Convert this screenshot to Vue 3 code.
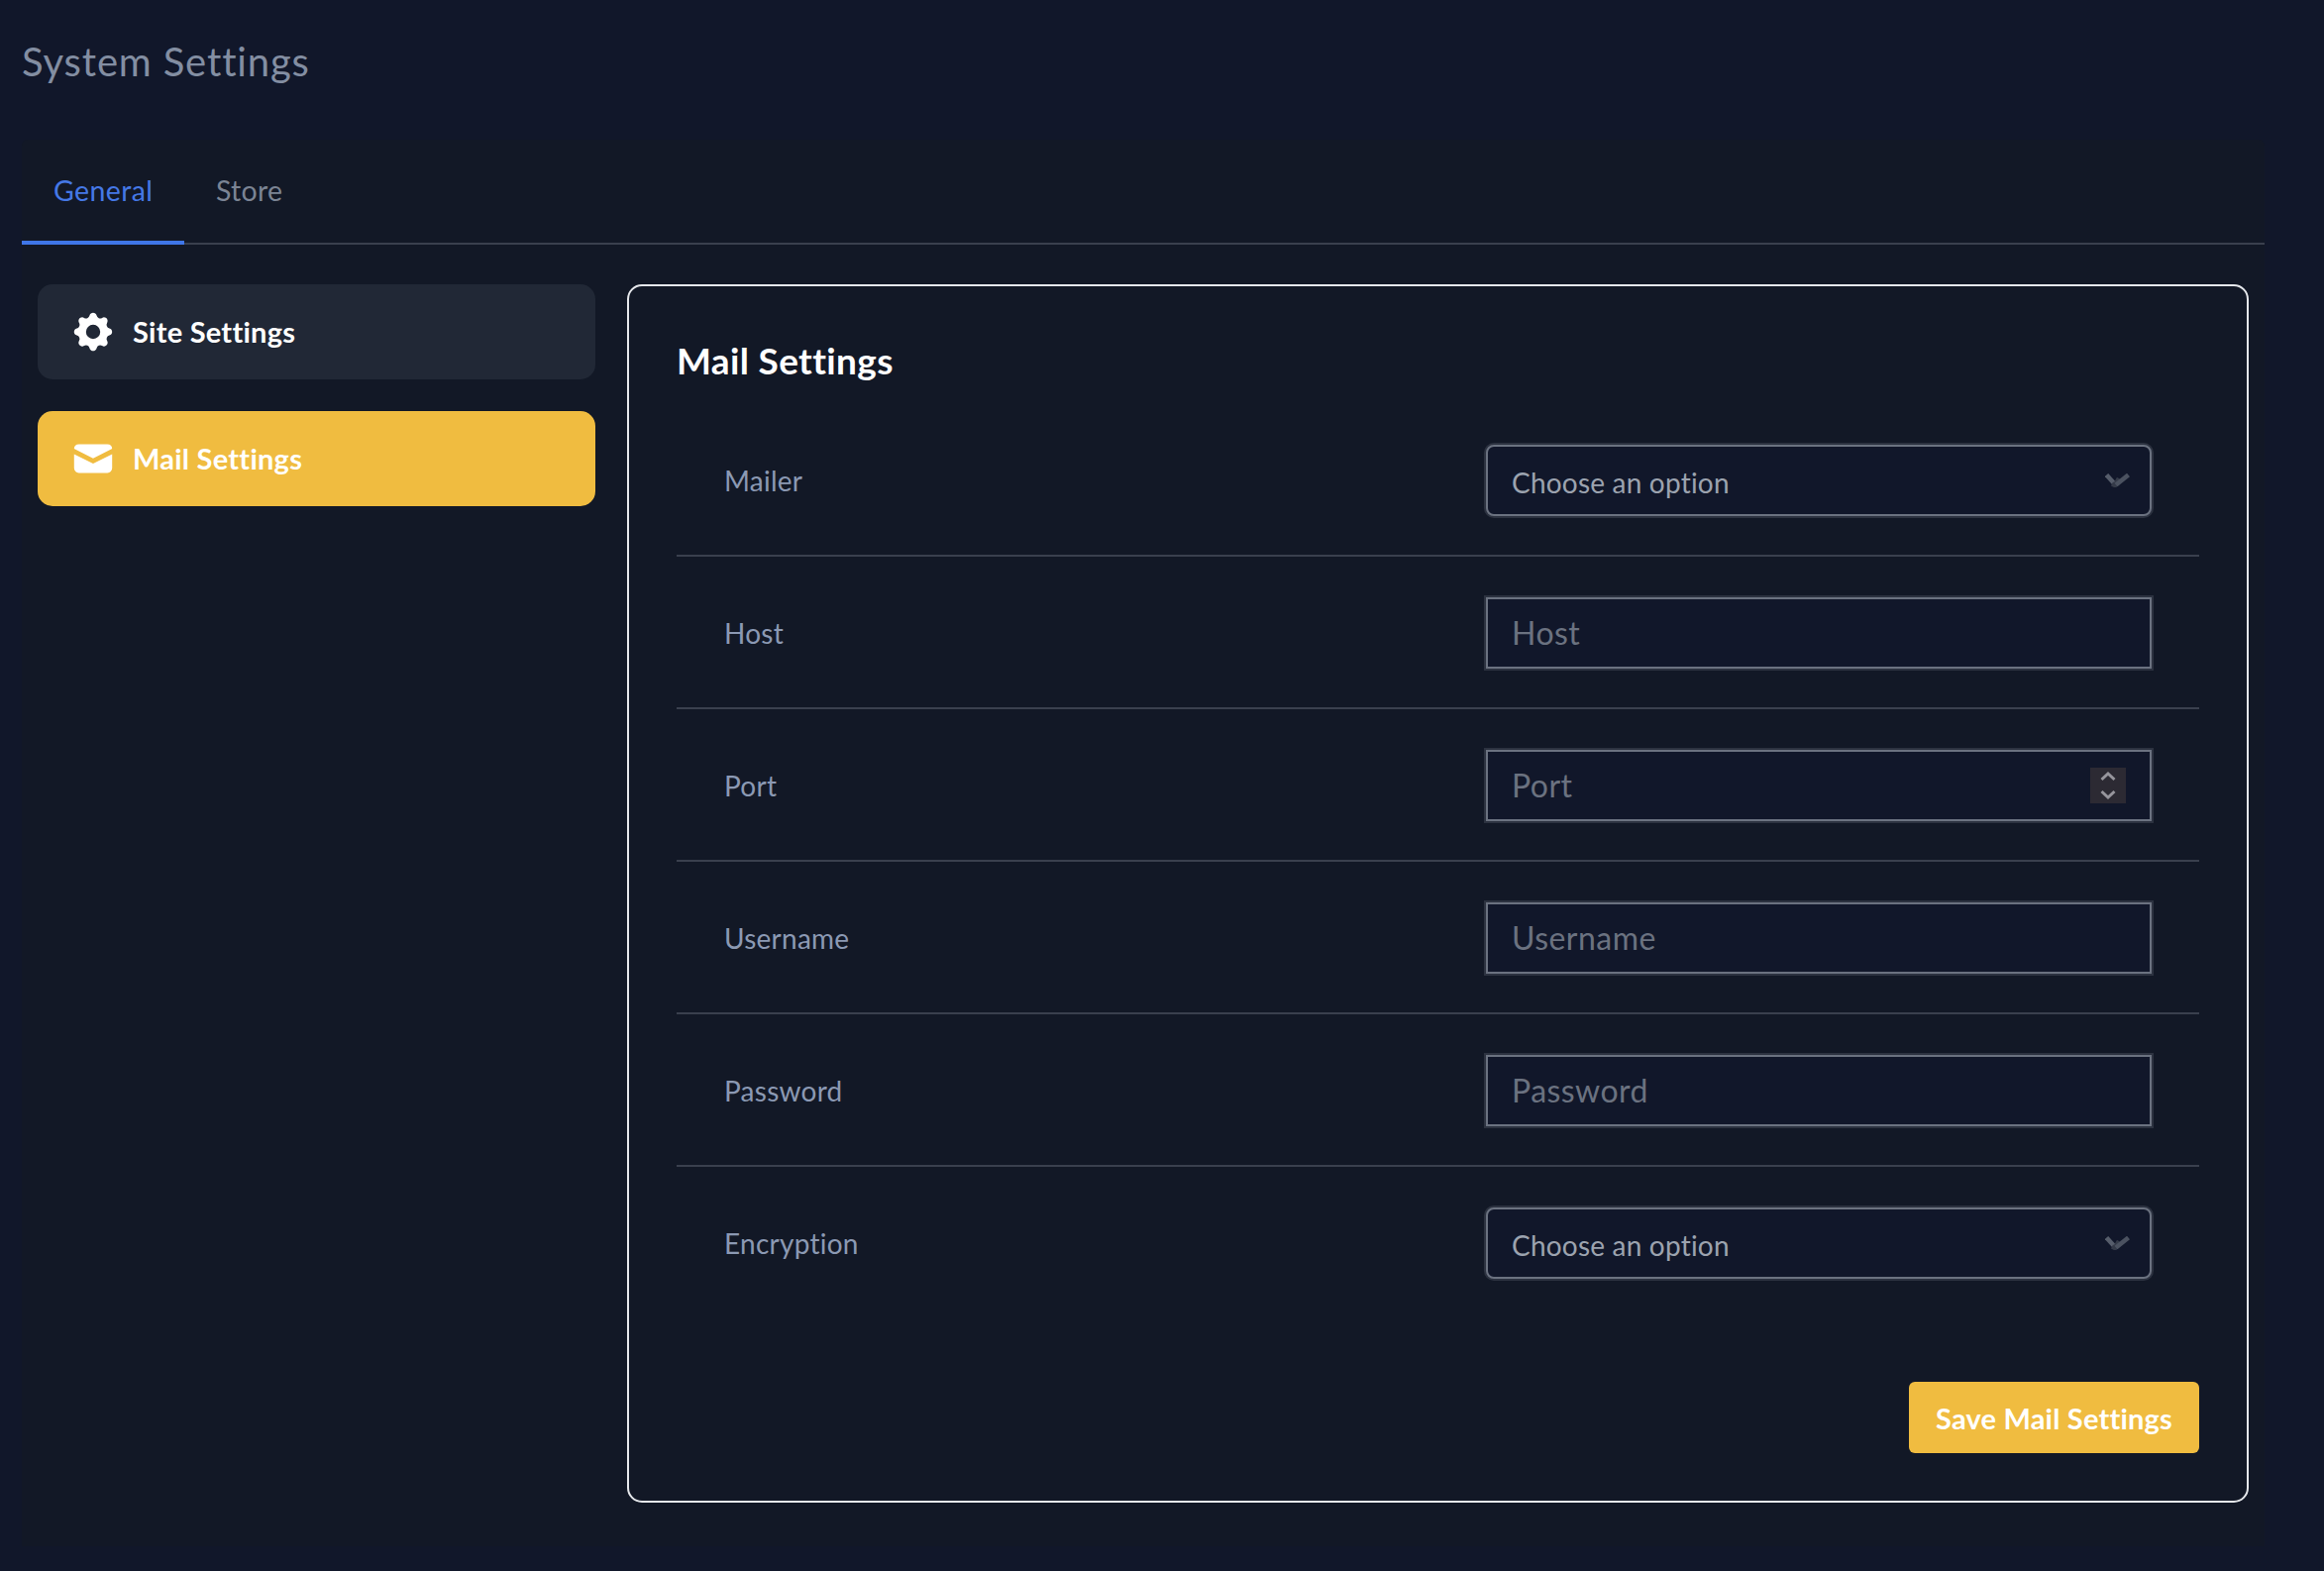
<script setup>
const rows = [
  { label: 'Mailer', kind: 'select' },
  { label: 'Host', kind: 'text' },
  { label: 'Port', kind: 'number' },
  { label: 'Username', kind: 'text' },
  { label: 'Password', kind: 'password' },
  { label: 'Encryption', kind: 'select' },
]
</script>

<template>
  <div class="page">
    <header class="head">
      <h1 class="title">System Settings</h1>
    </header>
    <section class="panel">
      <nav class="tabs">
        <a class="tab active">General</a>
        <a class="tab">Store</a>
      </nav>
      <div class="body">
        <aside class="side">
          <a class="item dark">
            <svg class="ico" viewBox="0 0 20 20" fill="#fff"><path fill-rule="evenodd" clip-rule="evenodd" d="M11.49 3.17c-.38-1.56-2.6-1.56-2.98 0a1.532 1.532 0 01-2.286.948c-1.372-.836-2.942.734-2.106 2.106.54.886.061 2.042-.947 2.287-1.561.379-1.561 2.6 0 2.978a1.532 1.532 0 01.947 2.287c-.836 1.372.734 2.942 2.106 2.106a1.532 1.532 0 012.287.947c.379 1.561 2.6 1.561 2.978 0a1.533 1.533 0 012.287-.947c1.372.836 2.942-.734 2.106-2.106a1.533 1.533 0 01.947-2.287c1.561-.379 1.561-2.6 0-2.978a1.532 1.532 0 01-.947-2.287c.836-1.372-.734-2.942-2.106-2.106a1.532 1.532 0 01-2.287-.947zM10 13a3 3 0 100-6 3 3 0 000 6z"/></svg>
            <span class="item-text">Site Settings</span>
          </a>
          <a class="item gold">
            <svg class="ico" viewBox="0 0 20 20" fill="#fff"><path d="M2.003 5.884L10 9.882l7.997-3.998A2 2 0 0016 4H4a2 2 0 00-1.997 1.884z"/><path d="M18 8.118l-8 4-8-4V14a2 2 0 002 2h12a2 2 0 002-2V8.118z"/></svg>
            <span class="item-text">Mail Settings</span>
          </a>
        </aside>
        <main class="card">
          <h2 class="card-title">Mail Settings</h2>
          <div class="rows">
            <div v-for="r in rows" :key="r.label" class="row">
              <label class="label">{{ r.label }}</label>
              <div class="field">
                <template v-if="r.kind === 'select'">
                  <select class="control select">
                    <option>Choose an option</option>
                  </select>
                  <svg class="chev" viewBox="0 0 25 14" fill="none" stroke-width="4.6">
                    <path d="M1.5 1.5 L10.5 11.5" stroke="#565d6b"/>
                    <path d="M7 10.5 L10 12 L14 5" stroke="#343a48"/>
                    <path d="M11 11.5 L23.5 1.5" stroke="#4b5260"/>
                  </svg>
                </template>
                <template v-else>
                  <input class="control input" :type="r.kind === 'number' ? 'text' : r.kind" :placeholder="r.label" />
                  <span v-if="r.kind === 'number'" class="spin">
                    <svg viewBox="0 0 36 36" fill="none" stroke="#96959c" stroke-width="3">
                      <path d="M11.5 12 L18 6 L24.500 12"/>
                      <path d="M11.500 24 L18 30 L24.500 24"/>
                    </svg>
                  </span>
                </template>
              </div>
            </div>
          </div>
          <div class="actions">
            <button class="save" type="button">Save Mail Settings</button>
          </div>
        </main>
      </div>
    </section>
  </div>
</template>

<style>
html, body { margin: 0; background: #11172a; }
</style>

<style scoped>
.page {
  min-height: 1586px;
  box-sizing: border-box;
  padding-left: 22px;
  background: #11172a;
  font-family: "Lato", "Noto Sans", sans-serif;
}
.head { height: 141px; box-sizing: border-box; padding-top: 40px; }
.title {
  margin: 0;
  font-size: 40px;
  line-height: 44px;
  font-weight: 400;
  color: #838ea2;
  letter-spacing: 0.85px;
}
.panel { width: 2264px; height: 1420px; background: #121826; border-radius: 6px 6px 0 0; }
.tabs {
  display: flex;
  height: 106px;
  box-sizing: border-box;
  border-bottom: 2px solid #3a404e;
}
.tab {
  display: flex;
  align-items: center;
  height: 106px;
  box-sizing: border-box;
  padding: 0 0 5px 32px;
  font-size: 28.5px;
  color: #7b8494;
  letter-spacing: 0.3px;
}
.tab.active { width: 164px; color: #4578e6; border-bottom: 4px solid #3f76e8; padding-bottom: 1px; letter-spacing: 0.4px; }
.body { display: flex; gap: 32px; padding: 40px 16px 0; }
.side { width: 563px; display: flex; flex-direction: column; gap: 32px; }
.item {
  display: flex;
  align-items: center;
  gap: 16px;
  height: 96px;
  box-sizing: border-box;
  padding-left: 32px;
  border-radius: 15px;
  font-size: 29px;
  font-weight: 700;
  color: #fff;
  letter-spacing: 0.25px;
}
.item-text { padding-bottom: 2px; }
.dark { background: #212836; }
.gold { background: #f0bc40; }
.ico { width: 48px; height: 48px; flex: none; }
.card {
  width: 1637px;
  height: 1230px;
  box-sizing: border-box;
  padding: 0 48px;
  border: 2px solid #e5e7eb;
  border-radius: 15px;
}
.card-title {
  margin: 0;
  height: 119px;
  box-sizing: border-box;
  padding: 53px 0 0 0;
  font-size: 37px;
  line-height: 44px;
  font-weight: 700;
  color: #fff;
  letter-spacing: 0.35px;
}
.row {
  display: flex;
  align-items: center;
  justify-content: space-between;
  height: 154px;
  box-sizing: border-box;
  padding: 2px 48px 0;
  border-bottom: 2px solid #3a404e;
}
.row:last-child { border-bottom-color: transparent; }
.label { font-size: 28px; color: #8b99b3; letter-spacing: 0.25px; }
.field { position: relative; width: 672px; height: 72px; }
.control {
  display: block;
  width: 100%;
  height: 100%;
  box-sizing: border-box;
  margin: 0;
  padding: 0 0 0 24px;
  background: #11172a;
  border: 2px solid #6b7280;
  box-shadow: 0 0 0 2px #2c3240;
  outline: none;
  font-family: inherit;
}
.input { border-radius: 0; color: #6b7280; font-size: 32px; letter-spacing: 0.45px; padding-bottom: 2px; }
.input::placeholder { color: #6b7280; opacity: 1; }
.select {
  appearance: none;
  -webkit-appearance: none;
  border-radius: 8px;
  color: #9ca3af;
  font-size: 28px;
  padding-top: 3px;
  letter-spacing: 0.2px;
}
.chev { position: absolute; right: 22px; top: 29px; width: 25px; height: 14px; }
.spin {
  position: absolute;
  right: 26px;
  top: 18px;
  width: 36px;
  height: 36px;
  background: #2c2a33;
}
.spin svg { display: block; width: 36px; height: 36px; }
.actions { display: flex; justify-content: flex-end; padding-top: 63px; }
.save {
  width: 293px;
  height: 72px;
  padding: 0;
  border: none;
  border-radius: 6px;
  background: #f0bc40;
  color: #fff;
  font-family: inherit;
  font-size: 29px;
  font-weight: 700;
  letter-spacing: 0.2px;
}
</style>
